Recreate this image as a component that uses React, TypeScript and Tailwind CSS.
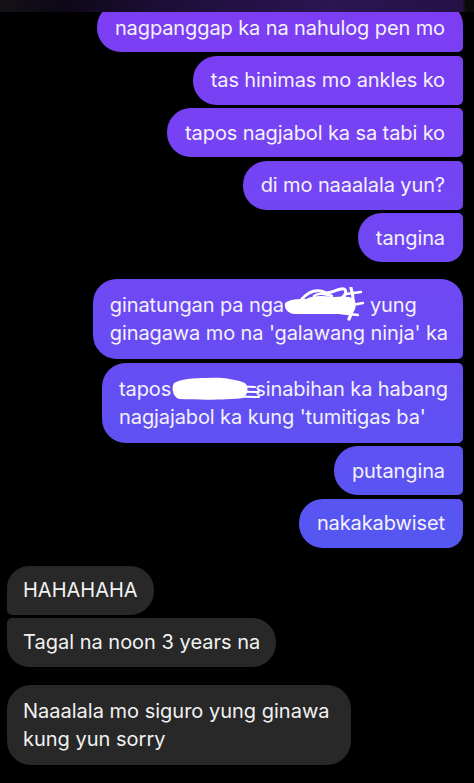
import React from "react";

// chat bubbles from the screenshot, right side = mine, left side = theirs
type Msg = {
  id: number;
  text: React.ReactNode;
  shape: string;
  lines?: 2;
  gapTop?: string;
};

const PURPLE =
  "bg-[linear-gradient(180deg,#7e3df3_0px,#6d49f4_300px,#5358f1_560px)] bg-fixed";

function ScribbleOne() {
  return (
    <span className="relative inline-block w-[86px] h-[28px] align-top">
      <svg
        className="absolute left-0 top-[-4px]"
        width="86"
        height="34"
        viewBox="0 0 86 34"
        fill="none"
      >
        <path
          d="M1 16 C6 12 14 12 22 12 C30 8 40 9 50 10 C58 9 66 9 70 12 C73 17 72 24 67 27 L10 27 C3 26 0 21 1 16 Z"
          fill="#ffffff"
        />
        <path
          d="M18 12 C24 5 32 2 40 5 C46 8 50 3 57 2 C62 1 64 6 58 11"
          stroke="#ffffff"
          strokeWidth="3"
          strokeLinecap="round"
        />
        <path
          d="M30 9 C36 4 44 8 48 9"
          stroke="#ffffff"
          strokeWidth="2.5"
          strokeLinecap="round"
        />
        <path
          d="M67 1 C70 10 70 22 65 32"
          stroke="#ffffff"
          strokeWidth="3.2"
          strokeLinecap="round"
        />
        <path
          d="M62 7 L77 5 M68 18 L79 16 M56 26 L74 28"
          stroke="#ffffff"
          strokeWidth="2.4"
          strokeLinecap="round"
        />
      </svg>
    </span>
  );
}

function ScribbleTwo() {
  return (
    <span className="relative inline-block w-[84px] h-[28px] align-top">
      <svg
        className="absolute left-0 top-0"
        width="90"
        height="28"
        viewBox="0 0 90 28"
        fill="none"
      >
        <path
          d="M3 8 C10 4 22 3 36 3 C50 2 64 4 74 8 C78 12 77 20 72 23 C56 25 30 25 8 24 C2 22 0 13 3 8 Z"
          fill="#ffffff"
        />
        <path
          d="M40 16 L88 17 M44 21 L88 22 M60 11 L84 12"
          stroke="#ffffff"
          strokeWidth="2"
          strokeLinecap="round"
        />
      </svg>
    </span>
  );
}

const MINE: Msg[] = [
  { id: 1, text: "nagpanggap ka na nahulog pen mo", shape: "rounded-l-[24px] rounded-tr-[22px] rounded-br-[5px]" },
  { id: 2, text: "tas hinimas mo ankles ko", shape: "rounded-l-[24px] rounded-r-[5px]" },
  { id: 3, text: "tapos nagjabol ka sa tabi ko", shape: "rounded-l-[24px] rounded-r-[5px]" },
  { id: 4, text: "di mo naaalala yun?", shape: "rounded-l-[24px] rounded-r-[5px]" },
  { id: 5, text: "tangina", shape: "rounded-l-[24px] rounded-tr-[5px] rounded-br-[16px]" },
  {
    id: 6,
    lines: 2,
    gapTop: "mt-[17px]",
    text: (
      <>
        ginatungan pa nga
        <ScribbleOne />
        yung
        <br />
        ginagawa mo na 'galawang ninja' ka
      </>
    ),
    shape: "rounded-l-[24px] rounded-tr-[22px] rounded-br-[5px]",
  },
  {
    id: 7,
    lines: 2,
    text: (
      <>
        tapos
        <ScribbleTwo />
        sinabihan ka habang
        <br />
        nagjajabol ka kung 'tumitigas ba'
      </>
    ),
    shape: "rounded-l-[24px] rounded-r-[5px]",
  },
  { id: 8, text: "putangina", shape: "rounded-l-[24px] rounded-r-[5px]" },
  { id: 9, text: "nakakabwiset", shape: "rounded-l-[24px] rounded-tr-[5px] rounded-br-[16px]" },
];

const THEIRS: Msg[] = [
  { id: 10, text: "HAHAHAHA", gapTop: "mt-[18px]", shape: "rounded-r-[24px] rounded-tl-[22px] rounded-bl-[5px]" },
  { id: 11, text: "Tagal na noon 3 years na", shape: "rounded-r-[24px] rounded-tl-[5px] rounded-bl-[22px]" },
  {
    id: 12,
    lines: 2,
    gapTop: "mt-[18px]",
    text: (
      <>
        Naaalala mo siguro yung ginawa
        <br />
        kung yun sorry
      </>
    ),
    shape: "rounded-[24px]",
  },
];

export default function App() {
  return (
    <div className="relative w-[474px] h-[783px] overflow-hidden bg-black font-['Inter','Noto_Sans',sans-serif] text-[20px] leading-[28px] text-[#f4f2fb]">
      {/* blurred header strip on top */}
      <div className="absolute inset-x-0 top-0 h-[12px] z-10 bg-[linear-gradient(90deg,#151216_0px,#0d0717_60px,#1c0e36_160px,#2b1553_330px,#241246_462px,#0a0a0a_466px)]" />

      <div className="flex flex-col pt-[3px] pl-[7px] pr-[11px]">
        {MINE.map((m, i) => (
          <div
            key={m.id}
            className={`flex justify-end ${m.gapTop ?? (i === 0 ? "" : "mt-[3.5px]")}`}
          >
            <div
              className={`${PURPLE} ${m.shape} ${
                m.lines === 2 ? "py-[12px] pl-[17px] pr-[15px]" : "py-[10.5px] px-[18px]"
              } whitespace-nowrap tracking-[-0.1px]`}
            >
              {m.text}
            </div>
          </div>
        ))}

        {THEIRS.map((m) => (
          <div key={m.id} className={`flex justify-start ${m.gapTop ?? "mt-[3px]"}`}>
            <div
              className={`bg-[#282828] ${m.shape} ${
                m.lines === 2 ? "py-[12px] pl-[16px] pr-[21px]" : "py-[10.5px] px-[16px]"
              } whitespace-nowrap text-[#f2f2f2]`}
            >
              {m.text}
            </div>
          </div>
        ))}
      </div>
    </div>
  );
}
